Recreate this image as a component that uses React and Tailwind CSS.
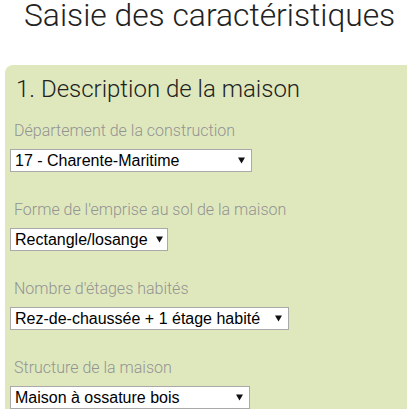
export default function App() {
  const fields = [
    { label: "Département de la construction", value: "17 - Charente-Maritime", w: "w-[242px]" },
    { label: "Forme de l'emprise au sol de la maison", value: "Rectangle/losange", w: "w-[158px]" },
    { label: "Nombre d'étages habités", value: "Rez-de-chaussée + 1 étage habité", w: "w-[279px]" },
    { label: "Structure de la maison", value: "Maison à ossature bois", w: "w-[240px]" },
  ];
  return (
    <div className="w-[407px] h-[409px] overflow-hidden bg-white" style={{ fontFamily: "Roboto, sans-serif" }}>
      <h1 className="pl-[24px] text-[31.8px] leading-[30px] font-light text-[#222] whitespace-nowrap">
        Saisie des caractéristiques
      </h1>
      <div className="ml-[5px] mt-[35px] bg-[#dfe8bd] rounded-tl-[8px] pb-4 pl-[5px]">
        <h2 className="pl-[6px] pt-[10px] text-[24px] leading-[28px] font-light text-[#222]">
          1. Description de la maison
        </h2>
        <div className="flex flex-col">
          {fields.map((f, i) => (
            <div key={i} className={`${i === 0 ? "mt-[18px]" : "mt-[28px]"} flex flex-col`}>
              <div className="pl-[4px] text-[16px] leading-[20px] font-light text-[#939393]">{f.label}</div>
              <div
                className={`${f.w} mt-[8px] h-[23px] bg-white border border-[#a9a9a9] flex items-center justify-between gap-[8px] pl-[4px] pr-[6px] text-[16px] text-black`}
                style={{ fontFamily: '"Liberation Sans", Arial, sans-serif' }}
              >
                <span className="whitespace-nowrap">{f.value}</span>
                <svg width="7" height="7" viewBox="0 0 7 7" className="shrink-0">
                  <path d="M0 0.5 H7 L3.5 6.5 Z" fill="#111" />
                </svg>
              </div>
            </div>
          ))}
        </div>
      </div>
    </div>
  );
}
